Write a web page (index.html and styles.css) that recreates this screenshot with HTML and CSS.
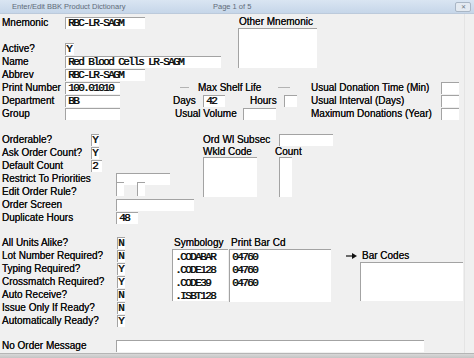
FILE: index.html
```html
<!DOCTYPE html>
<html lang="en">
<head>
    <meta charset="UTF-8">
    <title>Enter/Edit BBK Product Dictionary</title>
    <link rel="stylesheet" href="styles.css">
</head>
<body>
    <div class="window">
        <div class="titlebar">
            <span class="title">Enter/Edit BBK Product Dictionary</span>
            <span class="page">Page 1 of 5</span>
            <span class="close">&#x2715;</span>
        </div>

        <div class="form">
            <!-- identification -->
            <div class="top">
                <div class="top-left">
                    <div class="row"><span class="lbl">Mnemonic</span><span class="box w80">RBC-LR-SAGM</span></div>
                    <div class="row"></div>
                    <div class="row"><span class="lbl">Active?</span><span class="box flag w9">Y</span></div>
                    <div class="row"><span class="lbl">Name</span><span class="box w156">Red Blood Cells LR-SAGM</span></div>
                    <div class="row"><span class="lbl">Abbrev</span><span class="box w80">RBC-LR-SAGM</span></div>
                </div>
                <div class="other">
                    <span class="other-lbl">Other Mnemonic</span>
                    <span class="box other-box"></span>
                </div>
            </div>

            <!-- print number / shelf life / donation -->
            <div class="shelf">
                <div class="shelf-left">
                    <div class="row"><span class="lbl">Print Number</span><span class="box w55">100.01010</span></div>
                    <div class="row"><span class="lbl">Department</span><span class="box w55">BB</span></div>
                    <div class="row"><span class="lbl">Group</span><span class="box w55"></span></div>
                </div>
                <div class="shelf-mid">
                    <div class="row shelf-head"><span class="dash"></span><span class="head-txt">Max Shelf Life</span><span class="dash long"></span></div>
                    <div class="row days-row">
                        <span class="days-lbl">Days</span><span class="box w22">42</span>
                        <span class="hours-lbl">Hours</span><span class="box w13"></span>
                    </div>
                    <div class="row vol-row"><span class="vol-lbl">Usual Volume</span><span class="box w33"></span></div>
                </div>
                <div class="shelf-right">
                    <div class="row"><span class="lbl-don">Usual Donation Time (Min)</span><span class="box w18"></span></div>
                    <div class="row"><span class="lbl-don">Usual Interval (Days)</span><span class="box w18"></span></div>
                    <div class="row"><span class="lbl-don">Maximum Donations (Year)</span><span class="box w18"></span></div>
                </div>
            </div>

            <!-- ordering -->
            <div class="order">
                <div class="order-left">
                    <div class="row"><span class="lbl-ord">Orderable?</span><span class="box flag w8">Y</span></div>
                    <div class="row"><span class="lbl-ord">Ask Order Count?</span><span class="box flag w8">Y</span></div>
                    <div class="row"><span class="lbl-ord">Default Count</span><span class="box flag w11">2</span></div>
                    <div class="row"><span class="lbl-wide">Restrict To Priorities</span><span class="box w54"></span></div>
                    <div class="row rule-row"><span class="lbl-wide">Edit Order Rule?</span><span class="box w8 tall"></span><span class="box w8 tall gap13"></span></div>
                    <div class="row"><span class="lbl-wide">Order Screen</span><span class="box w78"></span></div>
                    <div class="row"><span class="lbl-wide">Duplicate Hours</span><span class="box w22">48</span></div>
                </div>
                <div class="order-right">
                    <div class="row"><span class="lbl-sub">Ord Wl Subsec</span><span class="box w54"></span></div>
                    <div class="wkld-head"><span class="wkld-lbl">Wkld Code</span><span>Count</span></div>
                    <div class="wkld-boxes"><span class="box wkld-box"></span><span class="box count-box"></span></div>
                </div>
            </div>

            <!-- units and bar codes -->
            <div class="units">
                <div class="units-left">
                    <div class="row"><span class="lbl-unit">All Units Alike?</span><span class="box flag w8">N</span></div>
                    <div class="row"><span class="lbl-unit">Lot Number Required?</span><span class="box flag w8">N</span></div>
                    <div class="row"><span class="lbl-unit">Typing Required?</span><span class="box flag w8">Y</span></div>
                    <div class="row"><span class="lbl-unit">Crossmatch Required?</span><span class="box flag w8">Y</span></div>
                    <div class="row"><span class="lbl-unit">Auto Receive?</span><span class="box flag w8">N</span></div>
                    <div class="row"><span class="lbl-unit">Issue Only If Ready?</span><span class="box flag w8">N</span></div>
                    <div class="row"><span class="lbl-unit">Automatically Ready?</span><span class="box flag w8">Y</span></div>
                </div>
                <div class="symb">
                    <div class="row col-head">Symbology</div>
                    <div class="box list symb-list">
                        <div>.CODABAR</div>
                        <div>.CODE128</div>
                        <div>.CODE39</div>
                        <div>.ISBT128</div>
                    </div>
                </div>
                <div class="printbar">
                    <div class="row col-head">Print Bar Cd</div>
                    <div class="box list pb-list">
                        <div>04760</div>
                        <div>04760</div>
                        <div>04760</div>
                    </div>
                </div>
                <div class="barcodes">
                    <div class="row"></div>
                    <div class="row">
                        <svg class="arrow" width="11" height="6" viewBox="0 0 11 6"><path d="M0 3h7" stroke="#111" stroke-width="1.2"/><polygon points="6,0 11,3 6,6" fill="#111"/></svg>
                        <span>Bar Codes</span>
                    </div>
                    <div class="box bc-box"></div>
                </div>
            </div>

            <div class="row msg-row"><span class="lbl-wide">No Order Message</span><span class="box w308"></span></div>
        </div>

        <div class="statusbar"></div>
    </div>
</body>
</html>
```

FILE: styles.css
```css
* {
    box-sizing: border-box;
}

body {
    margin: 0;
    width: 474px;
    height: 358px;
    overflow: hidden;
    background-color: #f0f0f0;
    font-family: "Liberation Sans", Arial, sans-serif;
    font-size: 10px;
    color: #111;
}

.window {
    width: 474px;
    height: 358px;
    display: flex;
    flex-direction: column;
}

.titlebar {
    height: 14px;
    display: flex;
    align-items: center;
    padding-left: 12px;
    background: linear-gradient(#d9e5f2, #c6d6e9);
    border-bottom: 1px solid #bccadb;
    font-size: 7.5px;
    color: #5f6b79;
}

.title {
    width: 201px;
}

.close {
    margin-left: auto;
    margin-right: 3px;
    width: 16px;
    height: 10px;
    border: 1px solid #a9b6c5;
    border-radius: 2px;
    background-color: #e4eaf1;
    font-size: 6px;
    line-height: 8px;
    text-align: center;
    color: #6b7785;
}

.form {
    flex: 1;
    width: 465px;
    padding: 2px 0 0 2px;
    border-right: 1px solid #e4e4e4;
    text-shadow: 0 0 0.3px #111;
}

.row {
    display: flex;
    align-items: center;
    height: 13px;
    white-space: nowrap;
}

.box {
    display: block;
    height: 12px;
    background-color: #fff;
    border-top: 1px solid #a3a3a3;
    border-left: 1px solid #a3a3a3;
    padding-left: 2px;
    font-family: "Liberation Mono", monospace;
    font-size: 11px;
    letter-spacing: -1.6px;
    line-height: 11px;
    text-shadow: 0.45px 0 0 #111;
    white-space: nowrap;
    overflow: hidden;
    color: #111;
}

.box.flag {
    padding-left: 0;
    overflow: visible;
}

.w8 { width: 8px; }
.w9 { width: 9px; }
.w11 { width: 11px; }
.w13 { width: 13px; }
.w18 { width: 18px; }
.w22 { width: 22px; }
.w33 { width: 33px; }
.w54 { width: 54px; }
.w55 { width: 55px; }
.w78 { width: 78px; }
.w80 { width: 80px; }
.w156 { width: 156px; }
.w308 { width: 308px; }

.gap13 {
    margin-left: 13px;
}

.lbl {
    width: 63px;
}

/* top block */
.top {
    display: flex;
}

.top-left {
    width: 236px;
}

.other {
    display: flex;
    flex-direction: column;
}

.other-lbl {
    height: 12px;
    line-height: 12px;
    padding-left: 1px;
}

.other-box {
    width: 79px;
    height: 40px;
}

/* shelf life block */
.shelf {
    display: flex;
}

.shelf-left {
    width: 170px;
}

.shelf-mid {
    width: 139px;
}

.shelf-head {
    padding-left: 8px;
}

.dash {
    width: 9px;
    height: 1px;
    background-color: #b3b3b3;
}

.dash.long {
    width: 12px;
}

.head-txt {
    margin: 0 17px 0 9px;
}

.days-row {
    padding-left: 1px;
}

.days-lbl {
    width: 30px;
}

.hours-lbl {
    margin-left: 25px;
    width: 34px;
}

.vol-row {
    padding-left: 3px;
}

.vol-lbl {
    width: 68px;
}

.lbl-don {
    width: 130px;
}

/* ordering block */
.order {
    display: flex;
    margin-top: 13px;
}

.order-left {
    width: 201px;
}

.lbl-ord {
    width: 89px;
}

.lbl-wide {
    width: 114px;
}

.lbl-sub {
    width: 76px;
}

.rule-row {
    align-items: flex-start;
}

.rule-row .lbl-wide {
    line-height: 13px;
}

.box.tall {
    height: 14px;
    margin-top: -3px;
}

.wkld-head {
    display: flex;
    height: 11px;
    line-height: 11px;
}

.wkld-lbl {
    width: 72px;
}

.wkld-boxes {
    display: flex;
}

.wkld-box {
    width: 54px;
    height: 40px;
}

.count-box {
    width: 13px;
    height: 40px;
    margin-left: 22px;
}

/* units block */
.units {
    display: flex;
    margin-top: 12px;
}

.units-left {
    width: 170px;
}

.lbl-unit {
    width: 115px;
}

.col-head {
    padding-left: 2px;
}

.symb {
    width: 57px;
}

.list {
    padding-left: 2px;
    padding-top: 1px;
    line-height: 13px;
    height: 52px;
}

.symb-list {
    width: 56px;
}

.printbar {
    width: 117px;
}

.pb-list {
    width: 102px;
    height: 53px;
}

.arrow {
    margin-right: 5px;
}

.bc-box {
    width: 103px;
    height: 39px;
    margin-left: 14px;
}

.msg-row {
    margin-top: 12px;
}

.statusbar {
    height: 5px;
    border-top: 1px solid #b5b5b5;
    background: linear-gradient(#d8d8d8, #c4c4c4);
}
```
